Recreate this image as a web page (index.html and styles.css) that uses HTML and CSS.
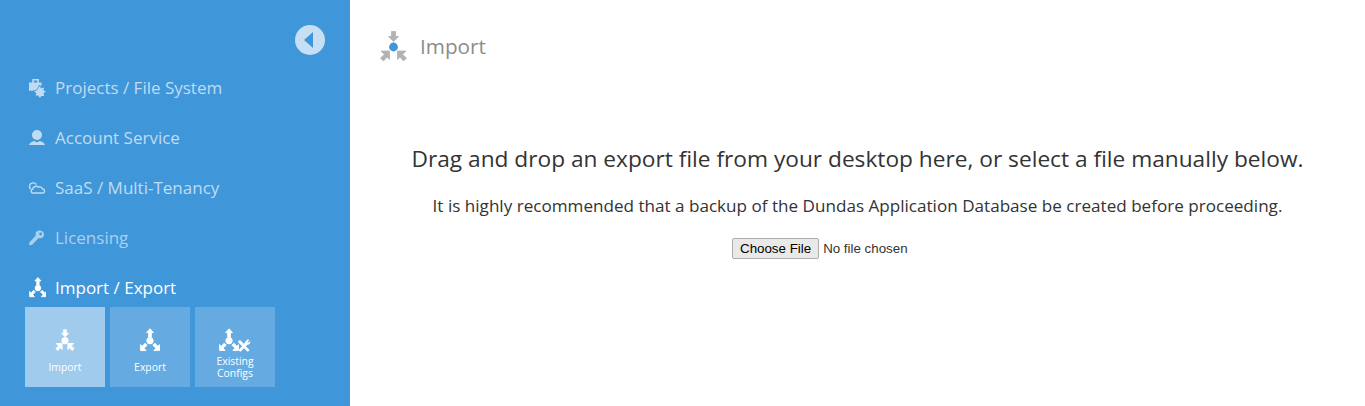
FILE: index.html
```html
<!DOCTYPE html>
<html lang="en">
<head>
  <meta charset="UTF-8" />
  <title>Import</title>
  <link rel="stylesheet" href="styles.css">
</head>
<body>
  <svg class="defs" width="0" height="0">
    <defs>
      <path id="arrowDown" d="M-2 -15.5H2V-10.5H5L0 -5.5L-5 -10.5H-2Z" />
      <path id="arrowUp" d="M0 -17L5 -11.5H2V-5H-2V-11.5H-5Z" />
      <path id="arrowInLeft" d="M-4 4V12.5L-6.5 10L-10 14L-13 11L-9 7.5L-12.5 4Z" />
      <path id="arrowInRight" d="M4 4V12.5L6.5 10L10 14L13 11L9 7.5L12.5 4Z" />
      <path id="arrowOutLeft" d="M-13.5 14V5.5L-11 8L-7 3.5L-4 6.5L-8.5 10.5L-5.5 14Z" />
      <path id="arrowOutRight" d="M13.5 14V5.5L11 8L7 3.5L4 6.5L8.5 10.5L5.5 14Z" />
      <g id="importIcon">
        <use href="#arrowDown" /><use href="#arrowInLeft" /><use href="#arrowInRight" />
      </g>
      <g id="exportIcon">
        <circle r="4.6" />
        <use href="#arrowUp" /><use href="#arrowOutLeft" /><use href="#arrowOutRight" />
      </g>
    </defs>
  </svg>

  <div class="sidebar">
    <div class="toggle-row">
      <button class="toggle"><span class="toggle-arrow"></span></button>
    </div>
    <ul class="nav">
      <li class="nav-item">
        <svg class="nav-icon" width="18" height="20" viewBox="0 0 18 20">
          <path d="M4.2 4.5V1H11V4.5H13.5V8L11 7L8.8 11.5L4.8 12.8H1V4.5ZM5.8 4.5H9.4V2.4H5.8Z" fill-rule="evenodd" />
          <path d="M11.5 8L13.2 10.2L16 9.6L15.4 12.2L18 13.6L15.6 15L16.2 18H13.4L11.8 20L10.2 17.6H7.4L8.4 15L6 13.6L9 12.2Z" />
        </svg>
        <span>Projects / File System</span>
      </li>
      <li class="nav-item">
        <svg class="nav-icon" width="18" height="20" viewBox="0 0 18 20">
          <circle cx="9" cy="7" r="5" />
          <path d="M1 17C1.6 14.4 4.2 13.8 6.4 13L9 14.6L11.6 13C13.8 13.8 16.4 14.4 17 17Z" />
        </svg>
        <span>Account Service</span>
      </li>
      <li class="nav-item">
        <svg class="nav-icon outline" width="18" height="20" viewBox="0 1 18 20">
          <path d="M2.6 12C.8 10.2 1.2 6.4 4.4 6C6 5.6 7.6 6.2 8.4 7.6" />
          <path d="M5 16C2.8 16 2.4 12.8 4.6 12.2C5 9.4 8.6 8.4 10.4 10.2C12 9.2 14.2 10.2 14.4 11.8C17 12 17.4 16 14.6 16Z" />
        </svg>
        <span>SaaS / Multi-Tenancy</span>
      </li>
      <li class="nav-item dim">
        <svg class="nav-icon" width="18" height="20" viewBox="0 0 18 20">
          <path d="M11.5 2.5C14.2 2.5 16.5 4.8 16 7.2C15.6 9.6 12.8 10.8 10.6 9.9L4.2 16.8C3.4 17.6 1.6 17.2 1.2 16.4C.9 15.6 1 14.8 1.6 14.2L7.8 7.6C6.8 4.8 8.8 2.5 11.5 2.5ZM12.6 4.6A1.4 1.4 0 1 0 12.61 7.4A1.4 1.4 0 1 0 12.6 4.6Z" fill-rule="evenodd" />
        </svg>
        <span>Licensing</span>
      </li>
      <li class="nav-item active">
        <svg class="nav-icon bold" width="18" height="24" viewBox="-16 -19.4 29 38.7">
          <use href="#exportIcon" />
        </svg>
        <span>Import / Export</span>
      </li>
    </ul>
    <div class="tiles">
      <div class="tile selected">
        <svg class="tile-icon" width="24" height="24" viewBox="-17 -18 34 34">
          <circle r="4.6" />
          <use href="#importIcon" />
        </svg>
        <span>Import</span>
      </div>
      <div class="tile">
        <svg class="tile-icon" width="24" height="24" viewBox="-17 -18 34 34">
          <use href="#exportIcon" />
        </svg>
        <span>Export</span>
      </div>
      <div class="tile">
        <svg class="tile-icon wide" width="40" height="24" viewBox="-20 -18 57 34">
          <use href="#exportIcon" />
          <path transform="translate(-1 3) scale(.88)" d="M16 -1.5L18.8 -4L25 2.4L31 -4.8C32 -5.4 33 -5 33 -4L30.4 -1.4L32 .6L34.6 -2C35.2 -.2 34.4 2 32.4 2.4L30.4 2.8L27.8 5.6L33.8 11.8L31.4 14L25.4 8L19.4 14L17 11.6L23 5.4Z" />
        </svg>
        <span>Existing<br>Configs</span>
      </div>
    </div>
  </div>

  <div class="main">
    <div class="page-title">
      <svg width="28" height="30" viewBox="-13.5 -16 28 30">
        <g class="title-arrows"><use href="#importIcon" /></g>
        <circle class="title-dot" r="4.4" />
      </svg>
      <h1>Import</h1>
    </div>
    <div class="dropzone">
      <h2>Drag and drop an export file from your desktop here, or select a file manually below.</h2>
      <p>It is highly recommended that a backup of the Dundas Application Database be created before proceeding.</p>
      <input type="file" />
    </div>
  </div>
</body>
</html>
```

FILE: styles.css
```css
* {
  box-sizing: border-box;
}
html, body {
  height: 100%;
}
body {
  margin: 0;
  display: flex;
  overflow: hidden;
  font-family: "Open Sans", "Liberation Sans", sans-serif;
  background-color: #fff;
}
.defs {
  position: absolute;
}

/* sidebar */
.sidebar {
  width: 350px;
  flex-shrink: 0;
  padding-top: 25px;
  background-color: #3f96d9;
}
.toggle-row {
  display: flex;
  justify-content: flex-end;
  padding-right: 25px;
  margin-bottom: 8px;
}
.toggle {
  display: flex;
  align-items: center;
  justify-content: center;
  width: 30px;
  height: 30px;
  padding: 0 3px 0 0;
  border: 0;
  border-radius: 50%;
  background-color: #c6dff4;
}
.toggle-arrow {
  border-style: solid;
  border-width: 8px 9px 8px 0;
  border-color: transparent #3f96d9 transparent transparent;
}
.nav {
  list-style-type: none;
  margin: 0;
  padding: 0 0 0 28px;
}
.nav-item {
  display: flex;
  align-items: center;
  gap: 9px;
  height: 50px;
  font-size: 17px;
  color: #c0dcf3;
  fill: #c0dcf3;
}
.nav-item span {
  padding-bottom: 2px;
}
.nav-item.dim {
  color: #a9d0ef;
  fill: #a9d0ef;
}
.nav-item.active {
  color: #fff;
  fill: #fff;
}
.nav-icon {
  flex-shrink: 0;
}
.nav-icon.outline {
  fill: none;
  stroke: #c0dcf3;
  stroke-width: 1.4;
}
.nav-icon.bold {
  stroke: #fff;
  stroke-width: 1.2;
}
.tiles {
  display: flex;
  gap: 5px;
  padding-left: 25px;
  margin-top: -6px;
}
.tile {
  display: flex;
  flex-direction: column;
  align-items: center;
  width: 80px;
  height: 80px;
  padding-top: 21px;
  font-size: 10.4px;
  line-height: 12px;
  text-align: center;
  color: #fff;
  fill: #fff;
  background-color: #65abe1;
}
.tile.selected {
  background-color: #a1cbec;
}
.tile-icon {
  margin-bottom: 9px;
  flex-shrink: 0;
  stroke: #fff;
  stroke-width: 1.2;
}
.tile-icon.wide {
  margin-bottom: 3px;
}

/* main area */
.main {
  flex: 1;
}
.page-title {
  display: flex;
  align-items: center;
  gap: 12px;
  padding: 30px 0 0 30px;
  height: 62px;
}
.page-title h1 {
  margin: 0;
  font-size: 20.7px;
  font-weight: 400;
  color: #8c8c8c;
}
.title-arrows {
  fill: #b3b3b3;
  stroke: #b3b3b3;
  stroke-width: .8;
}
.title-dot {
  fill: #3f96d9;
}
.dropzone {
  padding-top: 22px;
  text-align: center;
  color: #333;
}
.dropzone h2 {
  margin: 60px 0 0;
  font-size: 22.7px;
  line-height: 30px;
  font-weight: 400;
}
.dropzone p {
  margin: 21px 0 0;
  font-size: 17.1px;
  line-height: 22px;
}
.dropzone input {
  margin: 21px 0 0 2px;
  font-family: "Liberation Sans", Arial, sans-serif;
  font-size: 13.33px;
}
.dropzone input::file-selector-button {
  height: 21px;
  padding: 0 7px;
  border: 1px solid #adadad;
  border-radius: 2px;
  background-color: #e9e9e9;
}
```
